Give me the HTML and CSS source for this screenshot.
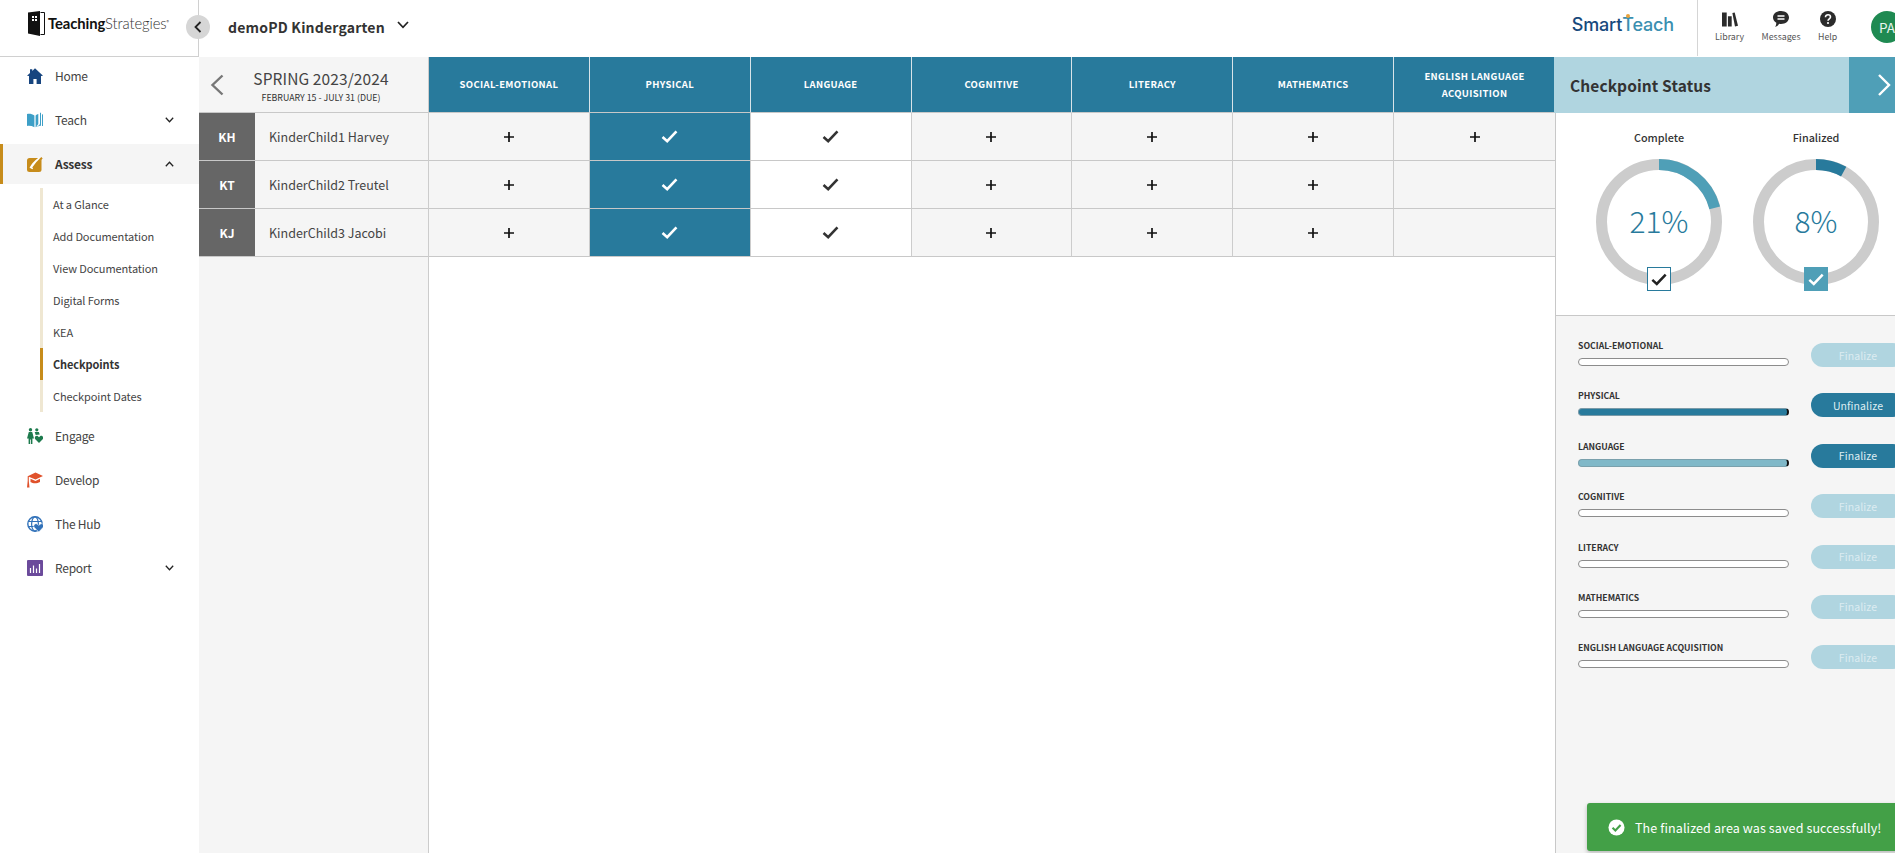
FILE: index.html
```html
<!DOCTYPE html>
<html lang="en">
<head>
<meta charset="utf-8">
<title>Checkpoints</title>
<link rel="stylesheet" href="styles.css">
</head>
<body>
<svg class="defs" width="0" height="0" aria-hidden="true">
  <symbol id="plus" viewBox="0 0 12 12"><path d="M6 1v10M1 6h10" stroke="#111" stroke-width="1.7" fill="none"/></symbol>
  <symbol id="check" viewBox="0 0 18 14"><path d="M1.500 7.500 6.500 12 16.500 1.500" stroke="currentColor" stroke-width="2.800" fill="none"/></symbol>
  <symbol id="down" viewBox="0 0 9 6"><path d="M.8 .8 4.500 4.700 8.200 .8" stroke="currentColor" stroke-width="1.300" fill="none"/></symbol>
  <symbol id="up" viewBox="0 0 9 6"><path d="M.8 5.200 4.500 1.300 8.200 5.200" stroke="currentColor" stroke-width="1.300" fill="none"/></symbol>
</svg>
<aside class="sidebar">
  <div class="brand">
    <svg class="door" viewBox="0 0 17 25"><path d="M0 1.500 12 0v25L0 22.500z" fill="#111"/><path d="M12.500 1.500H16.500V23.500H12.500" fill="none" stroke="#111" stroke-width="1"/><rect x="4" y="5" width="2" height="2" fill="#fff"/><rect x="7" y="5" width="2" height="2" fill="#fff"/><rect x="4" y="8" width="2" height="2" fill="#fff"/><rect x="7" y="8" width="2" height="2" fill="#fff"/></svg>
    <span class="brand-name"><b>Teaching</b>Strategies</span><sup class="brand-mark">®</sup>
  </div>
  <button class="collapse" aria-label="Collapse"><svg viewBox="0 0 8 12" width="8" height="12"><path d="M6.500 1 1.500 6l5 5" stroke="#222" stroke-width="1.800" fill="none"/></svg></button>
  <nav class="nav">
    <a class="nav-item"><svg class="nav-icon" viewBox="0 0 16 16"><path d="M8 .300 16 7.800 14 8v8H9.600v-5H6.400v5H2V8L0 7.800 3 5V1.200h2.300v1.800z" fill="#17457f"/></svg><span>Home</span></a>
    <a class="nav-item"><svg class="nav-icon" viewBox="0 0 16 16"><path d="M0 2C2.700 1.500 5.200 2 7.400 3.400V15.300C5 14 2.500 13.600 0 14z" fill="#3d9fc7"/><path d="M8.600 3.400C9.400 2.800 10.300 2.300 11.300 2V11.500C11.300 12.500 10.500 13.300 9.500 14L9.800 14.600C10.800 14 13 13 13 11.500V.8H14V13.800C12.500 13.800 10.500 14.300 8.600 15.300z" fill="#3d9fc7"/><path d="M15 2.200 16 2.400V14L15 13.900z" fill="#3d9fc7"/></svg><span>Teach</span><svg class="caret"><use href="#down"/></svg></a>
    <a class="nav-item active"><svg class="nav-icon" viewBox="0 0 16 16"><rect y="2" width="14.500" height="14" rx="2.500" fill="#c78c1b"/><path d="M4 12.500C5.500 9 9 5.500 13 2.500" stroke="#fff" stroke-width="3.200" fill="none"/><path d="M6 12C8 9 11 5.500 15 1.800" stroke="#c78c1b" stroke-width="2" fill="none"/></svg><span>Assess</span><svg class="caret"><use href="#up"/></svg></a>
    <div class="subnav">
      <a class="sub-item">At a Glance</a>
      <a class="sub-item">Add Documentation</a>
      <a class="sub-item">View Documentation</a>
      <a class="sub-item">Digital Forms</a>
      <a class="sub-item">KEA</a>
      <a class="sub-item current">Checkpoints</a>
      <a class="sub-item">Checkpoint Dates</a>
    </div>
    <a class="nav-item"><svg class="nav-icon" viewBox="0 0 16 16"><circle cx="3.500" cy="1.800" r="1.700" fill="#1d7a4d"/><circle cx="9.800" cy="1.800" r="1.600" fill="#1d7a4d"/><path d="M1.800 4h3.400L7 10.500H5.400V16H3.900v-4.500H3.100V16H1.600V10.500H0z" fill="#1d7a4d"/><path d="M7.700 4h4.200l.8 2.500L8.700 7z" fill="#1d7a4d"/><path d="M12 15 8.300 11.300c-1.500-2 .8-4.300 2.400-3.200L12 9.200l1.300-1.100c1.600-1.100 3.900 1.200 2.400 3.200z" fill="#1d7a4d"/></svg><span>Engage</span></a>
    <a class="nav-item"><svg class="nav-icon" viewBox="0 0 16 16"><path d="M8.500 .500 16 4 8.500 7.500 1.800 4.800V9H.700V4.200z" fill="#e0512b"/><path d="M3.500 6.800 8.500 9l4.500-2.200V10C10 11.800 6 11.800 3.500 10z" fill="#e0512b"/><path d="M0 15.500 .700 9h1.100l.7 6.500z" fill="#e0512b"/></svg><span>Develop</span></a>
    <a class="nav-item"><svg class="nav-icon" viewBox="0 0 16 16"><circle cx="8" cy="8" r="7.200" fill="none" stroke="#3272b9" stroke-width="1.400"/><ellipse cx="8" cy="8" rx="3.400" ry="7.200" fill="none" stroke="#3272b9" stroke-width="1.200"/><path d="M1 5.500h14M1 10.500h8" stroke="#3272b9" stroke-width="1.200"/><path d="M11.800 16 7.300 11.500c-1.700-2.300 1-4.700 2.700-3.500L11.800 9.300 13.600 8c1.700-1.200 4.400 1.200 2.400 3.500z" fill="#3272b9" stroke="#fff" stroke-width=".6"/></svg><span>The Hub</span></a>
    <a class="nav-item"><svg class="nav-icon" viewBox="0 0 16 16"><rect width="16" height="16" rx="1" fill="#6b4a9b"/><path d="M3.500 13V8M6.500 13V5.500M9.500 13V8.500M12.500 13V4" stroke="#fff" stroke-width="1.200"/></svg><span>Report</span><svg class="caret"><use href="#down"/></svg></a>
  </nav>
</aside>
<div class="workspace">
  <header class="topbar">
    <h1 class="site">demoPD Kindergarten</h1>
    <svg class="site-caret" viewBox="0 0 12 8"><path d="M1 1 6 6.300 11 1" stroke="#222" stroke-width="1.700" fill="none"/></svg>
    <div class="logo"><span class="logo-smart">Smart</span><span class="logo-teach">Teach</span></div>
    <div class="tools">
      <a class="tool"><svg viewBox="0 0 17 16"><path d="M0 1h5v15H0zM6.300 5h4v11h-4z" fill="#2b2b2b"/><path d="M11 1.500 13.500 1 17 15.300 13.800 16z" fill="#2b2b2b"/></svg><span>Library</span></a>
      <a class="tool"><svg viewBox="0 0 16 16"><path d="M8 0c4.500 0 8 2.800 8 6.500S12.500 13 8 13c-.700 0-1.300 0-1.900-.200C5.200 14.500 3.500 15.700 2 16c.8-1 1.300-2.500 1.300-4.300C1.300 10.500 0 8.600 0 6.500 0 2.800 3.500 0 8 0z" fill="#2b2b2b"/><path d="M4.500 5h7M4.500 8h7" stroke="#fff" stroke-width="1.300"/></svg><span>Messages</span></a>
      <a class="tool"><svg viewBox="0 0 16 16"><circle cx="8" cy="8" r="8" fill="#2b2b2b"/><path d="M5.500 6.200C5.500 4.700 6.600 3.800 8 3.800s2.500.9 2.500 2.200c0 1.800-2.500 1.900-2.500 3.800" stroke="#fff" stroke-width="1.600" fill="none"/><circle cx="8" cy="12" r="1.100" fill="#fff"/></svg><span>Help</span></a>
    </div>
    <div class="avatar">PA</div>
  </header>
  <main class="content">
    <section class="board">
      <div class="names">
        <div class="term">
          <svg class="term-back" viewBox="0 0 14 22"><path d="M12.500 1.500 2.500 11l10 9.500" stroke="#777" stroke-width="2.400" fill="none"/></svg>
          <div class="term-text"><div class="term-title">SPRING 2023/2024</div><div class="term-dates">FEBRUARY 15 - JULY 31 (DUE)</div></div>
        </div>
        <div class="child"><span class="initials">KH</span><span class="child-name">KinderChild1 Harvey</span></div>
        <div class="child"><span class="initials">KT</span><span class="child-name">KinderChild2 Treutel</span></div>
        <div class="child"><span class="initials">KJ</span><span class="child-name">KinderChild3 Jacobi</span></div>
      </div>
      <div class="grid">
        <div class="head">SOCIAL-EMOTIONAL</div><div class="head">PHYSICAL</div><div class="head">LANGUAGE</div><div class="head">COGNITIVE</div><div class="head">LITERACY</div><div class="head">MATHEMATICS</div><div class="head">ENGLISH LANGUAGE ACQUISITION</div>

        <div class="cell"><svg class="plus"><use href="#plus"/></svg></div><div class="cell final"><svg class="check"><use href="#check"/></svg></div><div class="cell done"><svg class="check"><use href="#check"/></svg></div><div class="cell"><svg class="plus"><use href="#plus"/></svg></div><div class="cell"><svg class="plus"><use href="#plus"/></svg></div><div class="cell"><svg class="plus"><use href="#plus"/></svg></div><div class="cell"><svg class="plus"><use href="#plus"/></svg></div>

        <div class="cell"><svg class="plus"><use href="#plus"/></svg></div><div class="cell final"><svg class="check"><use href="#check"/></svg></div><div class="cell done"><svg class="check"><use href="#check"/></svg></div><div class="cell"><svg class="plus"><use href="#plus"/></svg></div><div class="cell"><svg class="plus"><use href="#plus"/></svg></div><div class="cell"><svg class="plus"><use href="#plus"/></svg></div><div class="cell"></div>

        <div class="cell"><svg class="plus"><use href="#plus"/></svg></div><div class="cell final"><svg class="check"><use href="#check"/></svg></div><div class="cell done"><svg class="check"><use href="#check"/></svg></div><div class="cell"><svg class="plus"><use href="#plus"/></svg></div><div class="cell"><svg class="plus"><use href="#plus"/></svg></div><div class="cell"><svg class="plus"><use href="#plus"/></svg></div><div class="cell"></div>
      </div>
    </section>
    <aside class="status">
      <div class="status-head"><h2>Checkpoint Status</h2><div class="status-toggle"><svg viewBox="0 0 14 24" width="14" height="24"><path d="M2 2l10 10L2 22" stroke="#fff" stroke-width="2.400" fill="none"/></svg></div></div>
      <div class="rings">
        <div class="ring-box">
          <div class="ring-label">Complete</div>
          <div class="ring">
            <svg viewBox="0 0 126 126"><circle class="track" cx="63" cy="63" r="57.500"/><circle class="arc arc-light" cx="63" cy="63" r="57.500" pathLength="100" stroke-dasharray="21 79"/></svg>
            <span class="ring-value">21%</span>
            <span class="tick tick-open"><svg><use href="#check"/></svg></span>
          </div>
        </div>
        <div class="ring-box">
          <div class="ring-label">Finalized</div>
          <div class="ring">
            <svg viewBox="0 0 126 126"><circle class="track" cx="63" cy="63" r="57.500"/><circle class="arc arc-dark" cx="63" cy="63" r="57.500" pathLength="100" stroke-dasharray="8 92"/></svg>
            <span class="ring-value">8%</span>
            <span class="tick tick-solid"><svg><use href="#check"/></svg></span>
          </div>
        </div>
      </div>
      <div class="areas">
        <div class="area"><div class="area-info"><div class="area-name">SOCIAL-EMOTIONAL</div><div class="bar"></div></div><button class="btn off">Finalize</button></div>
        <div class="area"><div class="area-info"><div class="area-name">PHYSICAL</div><div class="bar bar-final"></div></div><button class="btn">Unfinalize</button></div>
        <div class="area"><div class="area-info"><div class="area-name">LANGUAGE</div><div class="bar bar-done"></div></div><button class="btn">Finalize</button></div>
        <div class="area"><div class="area-info"><div class="area-name">COGNITIVE</div><div class="bar"></div></div><button class="btn off">Finalize</button></div>
        <div class="area"><div class="area-info"><div class="area-name">LITERACY</div><div class="bar"></div></div><button class="btn off">Finalize</button></div>
        <div class="area"><div class="area-info"><div class="area-name">MATHEMATICS</div><div class="bar"></div></div><button class="btn off">Finalize</button></div>
        <div class="area"><div class="area-info"><div class="area-name">ENGLISH LANGUAGE ACQUISITION</div><div class="bar"></div></div><button class="btn off">Finalize</button></div>
      </div>
    </aside>
  </main>
</div>
<div class="toast"><svg viewBox="0 0 18 18" width="17" height="17"><circle cx="9" cy="9" r="8.500" fill="#fff"/><path d="M4.800 9.300 7.800 12.200 13.300 6.300" stroke="#43a047" stroke-width="2.200" fill="none"/></svg><span>The finalized area was saved successfully!</span></div>
</body>
</html>
```
FILE: styles.css
```css
* { box-sizing: border-box; }
html, body { height: 100%; }
body {
  margin: 0;
  width: 1895px;
  height: 853px;
  overflow: hidden;
  display: flex;
  position: relative;
  background: #fff;
  color: #444;
  font-family: "Noto Sans CJK SC", "Noto Sans", sans-serif;
}
.defs { position: absolute; }
a { display: block; color: inherit; text-decoration: none; }

/* sidebar */
.sidebar { width: 199px; flex: none; position: relative; background: #fff; }
.brand {
  height: 57px;
  border-right: 1px solid #d0d0d0;
  border-bottom: 1px solid #d0d0d0;
  display: flex;
  align-items: flex-start;
  padding: 11px 0 0 28px;
}
.door { width: 17px; height: 25px; flex: none; }
.brand-name { margin-left: 3px; font: 300 14.800px/25px Lato, sans-serif; color: #333; letter-spacing: -.1px; }
.brand-name b { font-weight: 700; color: #111; }
.brand-mark { font-size: 5px; line-height: 22px; color: #333; }
.collapse {
  position: absolute;
  left: 186px;
  top: 15px;
  width: 24px;
  height: 24px;
  border: 0;
  border-radius: 50%;
  padding: 0;
  background: #d6d6d6;
  display: flex;
  align-items: center;
  justify-content: center;
  z-index: 2;
}
.nav { margin-top: -3px; }
.nav-item {
  height: 44px;
  display: flex;
  align-items: center;
  padding-left: 27px;
  font-size: 12px;
  line-height: 20px;
  letter-spacing: -.25px;
  color: #444;
  position: relative;
}
.nav-item span { margin-left: 12px; }
.nav-icon { width: 16px; height: 16px; flex: none; }
.caret { position: absolute; left: 165px; top: 19px; width: 9px; height: 6px; color: #222; }
.active { background: #f5f5f5; border-left: 3px solid #c78c1b; padding-left: 24px; height: 40px; margin-top: 2px; margin-bottom: 2px; font-weight: 700; color: #333; }
.active .caret { left: 162px; top: 17px; }
.subnav { margin: 4px 0 2px 40px; border-left: 3px solid #efe7d2; }
.sub-item { height: 32px; display: flex; align-items: center; padding-left: 10px; font-size: 11px; letter-spacing: -.1px; color: #444; margin-left: -3px; border-left: 3px solid transparent; }
.sub-item.current { font-weight: 700; color: #333; border-left-color: #c78c1b; }

/* top bar */
.workspace { flex: 1; min-width: 0; display: flex; flex-direction: column; }
.topbar { height: 57px; flex: none; display: flex; align-items: flex-start; background: #fff; }
.site { margin: 16px 0 0 29px; font-size: 14px; line-height: 22px; font-weight: 700; letter-spacing: .2px; color: #333; }
.site-caret { width: 12px; height: 8px; margin: 21px 0 0 12px; }
.logo { margin: 14px 0 0 auto; font: 500 18px/22px Inter, sans-serif; letter-spacing: -.15px; }
.logo-smart { color: #17497c; }
.logo-teach { color: #3a8fb0; position: relative; }
.logo-teach::before { content: ""; position: absolute; left: 4px; top: 0; width: 4px; height: 4px; border-radius: 50%; background: #e9a23b; }
.tools { margin-left: 23px; height: 56px; width: 174px; flex: none; border-left: 1px solid #d5d5d5; display: flex; gap: 17.500px; padding: 11px 0 0 17px; }
.tool { display: flex; flex-direction: column; align-items: center; font-size: 8.800px; line-height: 12px; color: #555; }
.tool svg { width: 16px; height: 16px; margin-bottom: 4px; }
.avatar { margin: 11px -8px 0 0; width: 32px; height: 32px; flex: none; border-radius: 50%; background: #1f8a52; color: #e8f5ee; font-size: 13.500px; display: flex; align-items: center; justify-content: center; }

/* board */
.content { flex: 1; min-height: 0; display: flex; }
.board { width: 1356px; flex: none; display: flex; background: #fff; }
.names { width: 230px; flex: none; background: #f5f5f5; border-right: 1px solid #ccc; }
.term { height: 56px; display: flex; align-items: flex-start; border-bottom: 1px solid #c8c8c8; }
.term-back { width: 14px; height: 22px; margin: 17px 0 0 11px; flex: none; }
.term-text { width: 180px; text-align: center; margin: 10px 0 0 7px; }
.term-title { font-size: 15.500px; line-height: 22px; letter-spacing: .1px; color: #444; }
.term-dates { font-size: 8.800px; line-height: 14px; margin-top: 2px; color: #333; }
.child { height: 48px; display: flex; align-items: center; border-bottom: 1px solid #c8c8c8; }
.initials { width: 56px; height: 100%; flex: none; background: #666; color: #fff; font-weight: 700; font-size: 12px; display: flex; align-items: center; justify-content: center; }
.child-name { margin-left: 14px; font-size: 12.500px; color: #444; }
.grid { flex: 1; display: grid; grid-template-columns: repeat(7, 1fr); grid-template-rows: 56px repeat(3, 48px); align-content: start; }
.head { background: #287a9c; color: #fff; font-size: 9.500px; line-height: 17px; font-weight: 700; letter-spacing: .35px; display: flex; align-items: center; justify-content: center; text-align: center; padding: 0 20px; border-right: 1px solid #d8e4e9; border-bottom: 1px solid #c8c8c8; }
.head:nth-child(7) { border-right: 0; }
.cell { background: #f5f5f5; border-right: 1px solid #ccc; border-bottom: 1px solid #c8c8c8; display: flex; align-items: center; justify-content: center; }
.cell:nth-child(7n) { border-right: 0; }
.final { background: #287a9c; color: #fff; }
.done { background: #fff; color: #333; }
.plus { width: 12px; height: 12px; }
.check { width: 17px; height: 13px; }

/* status panel */
.status { flex: 1; min-width: 0; display: flex; flex-direction: column; background: #f5f5f5; }
.status-head { height: 56px; flex: none; margin-left: -1px; background: #b0d5e0; display: flex; align-items: center; justify-content: space-between; }
.status-head h2 { margin: 0 0 0 16px; font-size: 15.500px; font-weight: 700; color: #333; letter-spacing: .1px; }
.status-toggle { width: 46px; height: 100%; background: #4f9fb7; display: flex; align-items: center; justify-content: center; padding-left: 24px; }
.rings { height: 203px; flex: none; background: #fff; border-left: 1px solid #c8c8c8; border-bottom: 1px solid #c8c8c8; display: flex; padding: 14px 0 0 40px; gap: 31px; }
.ring-box { width: 126px; flex: none; }
.ring-label { text-align: center; font-size: 10.800px; line-height: 20px; font-weight: 500; color: #333; margin-bottom: 12px; }
.ring { position: relative; width: 126px; height: 126px; }
.ring svg { display: block; }
.track { fill: none; stroke: #ccc; stroke-width: 11; }
.arc { fill: none; stroke-width: 11; transform: rotate(-90deg); transform-origin: 63px 63px; }
.arc-light { stroke: #4f9fb7; }
.arc-dark { stroke: #287a9c; }
.ring-value { position: absolute; left: 0; right: 0; top: 39px; text-align: center; font-size: 30px; line-height: 44px; font-weight: 300; color: #287a9c; }
.tick { position: absolute; left: 51px; top: 108px; width: 24px; height: 24px; display: flex; align-items: center; justify-content: center; }
.tick svg { width: 16px; height: 13px; }
.tick-open { background: #fff; border: 1px solid #287a9c; color: #222; }
.tick-solid { background: #4f9fb7; color: #fff; }
.areas { flex: 1; padding: 22px 0 0 22px; border-left: 1px solid #c8c8c8; }
.area { height: 50.400px; display: flex; align-items: flex-start; }
.area-info { width: 211px; flex: none; margin-right: 22px; }
.area-name { font-size: 8.700px; line-height: 15px; font-weight: 700; color: #333; white-space: nowrap; }
.bar { height: 8px; margin-top: 5px; border: 1px solid #8c8c8c; border-radius: 4px; background: #fff; }
.bar-final { background: #287a9c; border-color: #7a9aa8; border-right: 2px solid #111; }
.bar-done { background: #80b8c8; border-color: #7aa0ac; border-right: 2px solid #111; }
.btn { width: 94px; height: 24px; flex: none; margin-top: 5px; border: 0; border-radius: 12px; background: #287a9c; color: #dfeef3; font-family: inherit; font-size: 10.500px; letter-spacing: .1px; padding: 0; }
.btn.off { background: #b0d5e0; color: #dcecf1; }
.toast { position: absolute; left: 1587px; top: 803px; width: 320px; height: 48px; background: #43a047; border-radius: 3px; box-shadow: 0 2px 4px rgba(0,0,0,.25); display: flex; align-items: center; padding-left: 21px; color: #fff; font-size: 12.500px; letter-spacing: .12px; white-space: nowrap; }
.toast span { margin-left: 10px; }
```
